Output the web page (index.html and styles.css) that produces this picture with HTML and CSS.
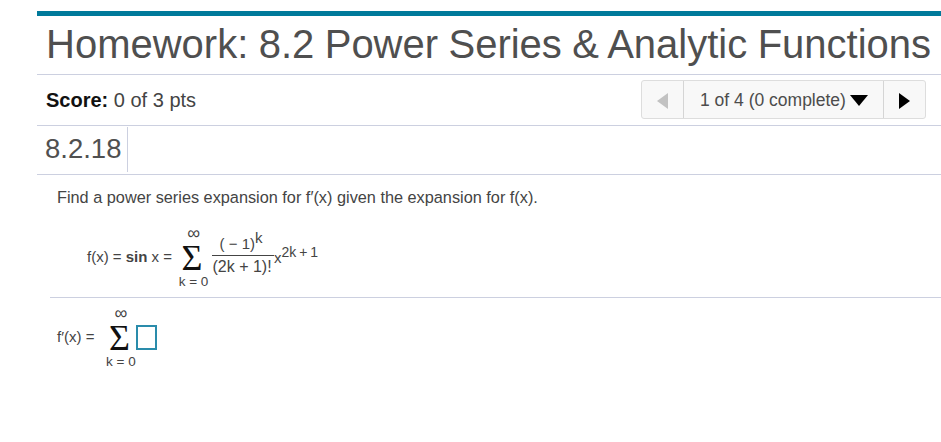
FILE: index.html
```html
<!DOCTYPE html>
<html lang="en">
<head>
  <meta charset="UTF-8" />
  <title>Homework: 8.2 Power Series &amp; Analytic Functions</title>
  <link rel="stylesheet" href="styles.css">
</head>
<body>

<div class="page">
  <h1 class="judul">Homework: 8.2 Power Series &amp; Analytic Functions</h1>

  <div class="score-bar">
    <div class="score"><b>Score:</b> 0 of 3 pts</div>
    <div class="pager">
      <div class="pager-prev"><span class="arrow-left"></span></div>
      <div class="pager-mid">1 of 4 (0 complete)<span class="arrow-down"></span></div>
      <div class="pager-next"><span class="arrow-right"></span></div>
    </div>
  </div>

  <div class="nomor-bar">
    <div class="nomor">8.2.18</div>
  </div>

  <div class="soal">
    <p class="kalimat">Find a power series expansion for f&#8242;(x) given the expansion for f(x).</p>

    <div class="rumus rumus-atas">
      <span class="ruas">f(x) = <b>sin</b> x =</span>
      <div class="sigma">
        <span class="batas batas-atas">&#8734;</span>
        <span class="sigma-besar">&Sigma;</span>
        <span class="batas batas-bawah">k = 0</span>
      </div>
      <div class="pecahan">
        <div class="pembilang">( &#8722; 1)<sup>k</sup></div>
        <div class="penyebut">(2k + 1)!</div>
      </div>
      <span class="pangkat-x">x<sup>2k + 1</sup></span>
    </div>

    <hr class="garis">

    <div class="rumus rumus-bawah">
      <span class="ruas">f&#8242;(x) =</span>
      <div class="sigma">
        <span class="batas batas-atas">&#8734;</span>
        <span class="sigma-besar">&Sigma;</span>
        <span class="batas batas-bawah">k = 0</span>
      </div>
      <div class="kotak"></div>
    </div>
  </div>
</div>

</body>
</html>
```

FILE: styles.css
```css
* {
  box-sizing: border-box;
  margin: 0;
  padding: 0;
}

html, body {
  height: 100%;
  overflow: hidden;
}

body {
  background: #fff;
  font-family: "Liberation Sans", Arial, sans-serif;
  color: #4c4c4c;
}

.page {
  margin: 11px 0 0 37px;
  border-top: 5px solid #007a9b;
}

.judul {
  height: 59px;
  padding: 5px 0 0 9px;
  font-size: 40px;
  line-height: 47px;
  font-weight: normal;
  word-spacing: -0.7px;
  color: #4f4f4f;
  white-space: nowrap;
  border-bottom: 1px solid #ccd0e0;
}

.score-bar {
  display: flex;
  justify-content: space-between;
  align-items: center;
  height: 51px;
  padding: 0 15px 0 9px;
  border-bottom: 1px solid #ccd0e0;
}

.score {
  font-size: 20px;
  color: #444;
}

.score b {
  color: #111;
}

.pager {
  display: flex;
  width: 285px;
  height: 39px;
  margin-top: -1px;
  background: #f8f8f8;
  border: 1px solid #ddd;
  border-radius: 3px;
  font-size: 17.5px;
}

.pager-prev, .pager-next {
  display: flex;
  align-items: center;
  justify-content: center;
  padding-top: 2px;
}

.pager-prev {
  width: 42px;
  border-right: 1px solid #d5d5d5;
}

.pager-mid {
  display: flex;
  align-items: center;
  width: 200px;
  padding: 2px 0 0 16px;
  white-space: nowrap;
  border-right: 1px solid #d5d5d5;
}

.pager-next {
  flex: 1;
}

.arrow-left {
  border-top: 8px solid transparent;
  border-bottom: 8px solid transparent;
  border-right: 11px solid #c2c2c2;
}

.arrow-right {
  border-top: 8px solid transparent;
  border-bottom: 8px solid transparent;
  border-left: 11px solid #000;
}

.arrow-down {
  margin-left: 4px;
  border-left: 9px solid transparent;
  border-right: 9px solid transparent;
  border-top: 11px solid #000;
}

.nomor-bar {
  height: 49px;
  padding-top: 1px;
  border-bottom: 1px solid #ccd0e0;
}

.nomor {
  width: 91px;
  height: 45px;
  padding-left: 8px;
  font-size: 27.5px;
  line-height: 43px;
  color: #505050;
  border-right: 1px solid #ccd0e0;
}

.soal {
  padding: 14px 0 0 13px;
  font-size: 15px;
  color: #444;
}

.kalimat {
  padding-left: 7px;
  font-size: 16.3px;
  line-height: 16px;
}

.rumus {
  display: flex;
  align-items: center;
}

.rumus-atas {
  height: 65px;
  margin-top: 20px;
  padding-left: 37px;
}

.rumus-bawah {
  height: 65px;
  margin-top: 7px;
  padding-left: 7px;
}

.ruas {
  padding-bottom: 2px;
}

.sigma {
  display: flex;
  flex-direction: column;
  align-items: center;
  width: 32px;
  margin-left: 4px;
}

.rumus-bawah .sigma {
  margin-left: 9px;
}

.batas {
  padding-left: 3px;
  font-size: 13.5px;
  line-height: 15px;
  white-space: nowrap;
}

.batas-atas {
  font-size: 18px;
}

.batas-bawah {
  margin-top: -1px;
}

.sigma-besar {
  font-family: "Liberation Serif", serif;
  font-size: 36px;
  line-height: 34px;
  color: #111;
}

.pecahan {
  width: 62px;
  margin-left: 4px;
  text-align: center;
}

.pembilang {
  height: 20px;
  padding-right: 4px;
  line-height: 16px;
  border-bottom: 1px solid #444;
}

.pembilang sup {
  font-size: 15px;
  line-height: 0;
}

.penyebut {
  height: 23px;
  padding-right: 2px;
  font-size: 16px;
  line-height: 22px;
}

.pangkat-x {
  line-height: 20px;
}

.pangkat-x sup {
  font-size: 14px;
  word-spacing: -1px;
  line-height: 0;
}

.garis {
  border: 0;
  border-top: 1px solid #ccd0e0;
  margin-top: 7px;
}

.kotak {
  width: 21px;
  height: 25px;
  margin-left: 1px;
  background: #fff;
  border: 2px solid #2a8cab;
}
```
